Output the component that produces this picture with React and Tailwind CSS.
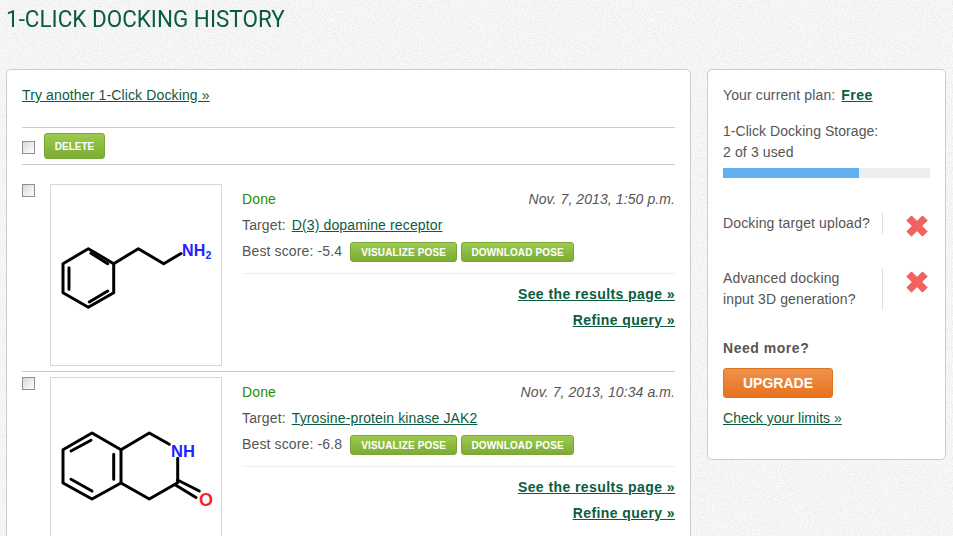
const GreenBtn = ({ children, className = "" }) => (
  <button className={`mt-[2px] h-5 rounded-[3px] border border-[#7aa636] bg-gradient-to-b from-[#9ccb4f] to-[#7dab33] pt-[1px] text-[10px] leading-none font-bold tracking-[0.15px] text-white ${className}`}>
    {children}
  </button>
);

const Check = () => (
  <input type="checkbox" className="block h-[13px] w-[13px] appearance-none border border-[#8f8f8f] bg-gradient-to-br from-[#d5d8dc] to-white" />
);

const RedX = () => (
  <svg width="22" height="22" viewBox="0 0 24 24" className="block">
    <path d="M6 1 L12 7 L18 1 L23 6 L17 12 L23 18 L18 23 L12 17 L6 23 L1 18 L7 12 L1 6 Z" fill="#f4625f" stroke="#e24a47" strokeWidth="1" strokeLinejoin="round" />
  </svg>
);

const Phenethylamine = () => (
  <svg width="170" height="180" viewBox="0 0 170 180" fill="none" stroke="#000" strokeWidth="3" strokeLinecap="round" strokeLinejoin="round">
    <path d="M37.3 63.7 L62.7 78.7 L62.7 107.7 L37.3 122.3 L12 107.7 L12 78.7 Z" />
    <path d="M40 68.3 L56.7 78.7 M18 82.7 L18 104.3 M38.3 117 L56.7 106" />
    <path d="M62.7 78.7 L87.3 63.7 L112.7 78.7 L130 68.5" />
    <text x="131" y="71" stroke="none" fill="#2222ff" fontSize="16" fontWeight="700" fontFamily="Liberation Sans, sans-serif">
      NH<tspan fontSize="10.5" dy="3">2</tspan>
    </text>
  </svg>
);

const Isoquinolinone = () => (
  <svg width="170" height="180" viewBox="0 0 170 180" fill="none" stroke="#000" strokeWidth="3" strokeLinecap="round" strokeLinejoin="round">
    <path d="M41 55 L70 71.7 L70 105 L41 121 L12 105 L12 71.7 Z" />
    <path d="M20 73 L40 62.3 M62.7 76.3 L62.7 101.3 M20 101.3 L41 113" />
    <path d="M70 71.7 L98.3 55 L118.3 66.3 M126.7 80.3 L126.7 104.7 L98.3 121 L70 105" />
    <path d="M126.5 102 L148.3 113 M124.5 107 L145 119.5" />
    <text x="120" y="79" stroke="none" fill="#2222ff" fontSize="16.5" fontWeight="700" fontFamily="Liberation Sans, sans-serif">NH</text>
    <text x="148" y="128" stroke="none" fill="#ff2020" fontSize="18" fontWeight="700" fontFamily="Liberation Sans, sans-serif">O</text>
  </svg>
);

const rows = [
  { date: "Nov. 7, 2013, 1:50 p.m.", target: "D(3) dopamine receptor", score: "-5.4", Mol: Phenethylamine },
  { date: "Nov. 7, 2013, 10:34 a.m.", target: "Tyrosine-protein kinase JAK2", score: "-6.8", Mol: Isoquinolinone },
];

export default function App() {
  return (
    <div className="relative h-screen overflow-hidden bg-[#ececec] font-['Liberation_Sans',Arial,sans-serif] text-sm tracking-[0.13px] text-[#555]">
      {/* paper texture of the page background */}
      <svg className="absolute inset-0 h-full w-full">
        <filter id="paper">
          <feTurbulence type="fractalNoise" baseFrequency="0.8" numOctaves="2" seed="3" />
          <feColorMatrix values="0 0 0 0 1  0 0 0 0 1  0 0 0 0 1  1.8 0 0 0 -0.45" />
        </filter>
        <rect width="100%" height="100%" filter="url(#paper)" />
      </svg>

      <div className="relative">
        <h1 className="ml-[6px] h-[69px] origin-left scale-x-[0.936] pt-[3px] font-['Roboto',sans-serif] text-2xl leading-8 tracking-normal text-[#0b5c3e]">
          1-CLICK DOCKING HISTORY
        </h1>

        <div className="flex items-start gap-4 pl-[6px]">
          {/* History list */}
          <div className="w-[685px] shrink-0 rounded-t-[5px] border border-[#ccc] bg-white px-[15px] pt-[12px]">
            <div className="h-[45px] leading-[26px]">
              <a className="text-[#0b5c3e] underline">Try another 1-Click Docking »</a>
            </div>
            <div className="flex h-[38px] items-center gap-[9px] border-y border-[#ccc]">
              <div className="pt-[2px]"><Check /></div>
              <button className="h-[26px] w-[61px] rounded-[3px] border border-[#7aa636] bg-gradient-to-b from-[#9ccb4f] to-[#7dab33] pt-[1px] text-[10px] leading-none font-bold tracking-normal text-white">
                DELETE
              </button>
            </div>

            <div className="pt-[19px]">
              {rows.map(({ date, target, score, Mol }, i) => (
                <div key={i} className={i > 0 ? "mt-[5px] border-t border-[#ccc] pt-[5px]" : ""}>
                  <div className="flex">
                    <Check />
                    <div className="ml-[15px] h-[182px] w-[172px] shrink-0 border border-[#d8d8d8]">
                      <Mol />
                    </div>
                    <div className="ml-5 flex-1 pt-[2px] leading-[26px]">
                      <div className="flex justify-between">
                        <span className="text-[#2e8b00]">Done</span>
                        <span className="italic tracking-[0.09px]">{date}</span>
                      </div>
                      <div>
                        Target: <a className="ml-[2px] text-[#0b5c3e] underline">{target}</a>
                      </div>
                      <div className="flex h-[26px] items-center">
                        <span>Best score: {score}</span>
                        <GreenBtn className="ml-2 w-[107px]">VISUALIZE POSE</GreenBtn>
                        <GreenBtn className="ml-1 w-[113px]">DOWNLOAD POSE</GreenBtn>
                      </div>
                      <div className="mt-[9px] border-t border-[#eee] pt-[7px] text-right font-bold tracking-[0.42px] text-[#0b5c3e]">
                        <div><a className="underline">See the results page »</a></div>
                        <div><a className="underline">Refine query »</a></div>
                      </div>
                    </div>
                  </div>
                </div>
              ))}
            </div>
          </div>

          {/* Plan sidebar */}
          <div className="h-[391px] w-[239px] shrink-0 rounded-[5px] border border-[#ccc] bg-white px-[15px] pt-[12px] leading-[21px]">
            <div className="leading-[26px]">
              Your current plan: <a className="ml-[2px] font-bold tracking-[0.42px] text-[#0b5c3e] underline">Free</a>
            </div>
            <div className="mt-[13px] tracking-[0.05px]">1-Click Docking Storage:</div>
            <div>2 of 3 used</div>
            <div className="mt-[5px] h-[10px] w-full bg-[#eee]">
              <div className="h-full bg-[#62aff0]" style={{ width: `${(136 / 207) * 100}%` }} />
            </div>

            <div className="mt-[35px] flex h-[21px] items-center justify-between">
              <span className="flex h-full w-[160px] items-center border-r border-[#ddd]">Docking target upload?</span>
              <span className="mr-[2px] mt-[5px]"><RedX /></span>
            </div>

            <div className="mt-[34px] flex items-start justify-between">
              <span className="w-[160px] border-r border-[#ddd]">Advanced docking<br />input 3D generation?</span>
              <span className="mr-[2px] mt-[3px]"><RedX /></span>
            </div>

            <div className="mt-[28px] font-bold tracking-[0.53px]">Need more?</div>
            <button className="mt-[9px] block h-[30px] w-[110px] rounded-[3px] border border-[#dd7420] bg-gradient-to-b from-[#ef924c] to-[#e87119] text-sm leading-none font-bold tracking-normal text-white">
              UPGRADE
            </button>
            <div className="mt-[10px] tracking-[0.03px]">
              <a className="text-[#0b5c3e] underline">Check your limits »</a>
            </div>
          </div>
        </div>
      </div>
    </div>
  );
}
